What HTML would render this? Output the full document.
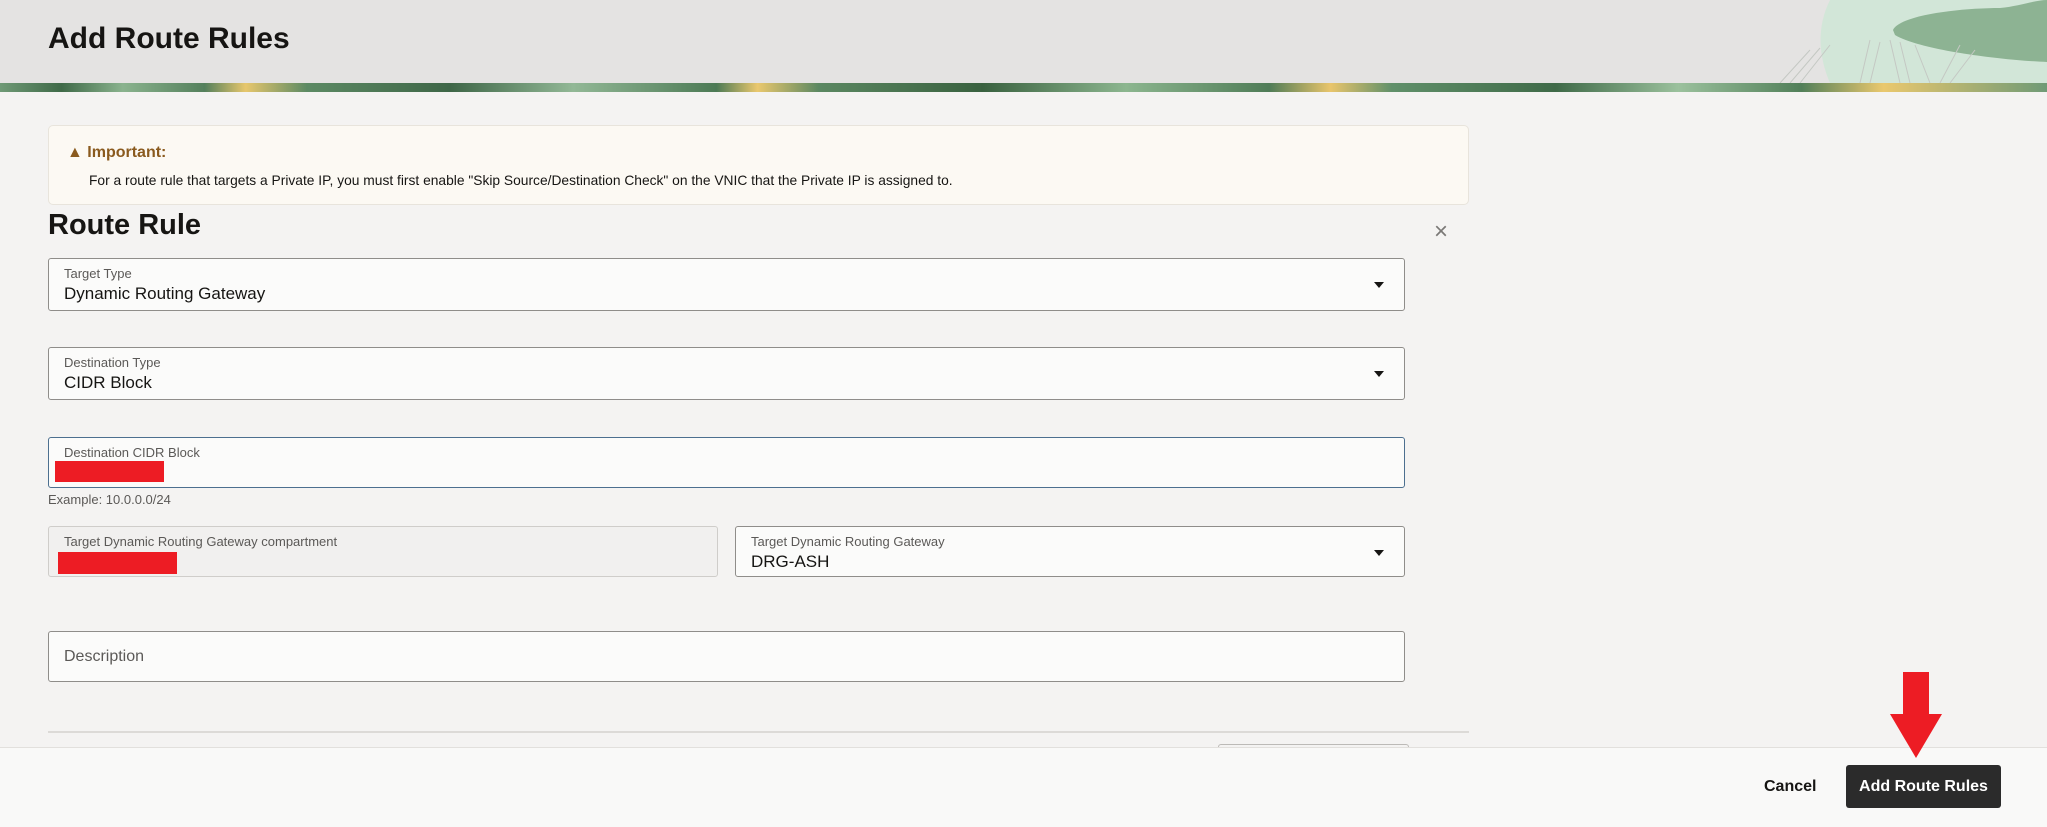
<!DOCTYPE html>
<html><head><meta charset="utf-8"><style>
*{box-sizing:border-box;margin:0;padding:0}
body{width:2047px;height:827px;overflow:hidden;background:#f4f3f2;font-family:"Liberation Sans",sans-serif;color:#161513;position:relative}
.abs{position:absolute}
.hdr{left:0;top:0;width:2047px;height:83px;background:#e4e3e2;overflow:hidden}
.band{left:0;top:83px;width:2047px;height:9px;background:linear-gradient(90deg,#6f9a76 0,#3f6a48 3%,#8ab38e 6%,#54805c 10%,#e7c76d 12%,#5c8a64 15%,#3e6647 22%,#92b896 28%,#4c7a55 35%,#eac86e 37%,#5b8862 40%,#39613f 48%,#8cb68f 55%,#4f7c57 62%,#e9c56c 65%,#60906a 68%,#3f6a48 76%,#9bc19d 82%,#517f59 88%,#eac86e 92%,#6f9a76 100%)}
.title{left:48px;top:22px;font-size:30px;font-weight:bold}
.imp{left:48px;top:125px;width:1421px;height:80px;background:#fcf9f3;border:1px solid #e8e4dc;border-radius:5px}
.field{border:1px solid #8f8d8a;border-radius:3px;background:#fbfbfa}
.lbl{position:absolute;left:15px;top:7px;font-size:13px;color:#5b5957}
.val{position:absolute;left:15px;top:25px;font-size:17px}
.caret{position:absolute;right:20px;top:23px;width:0;height:0;border-left:5px solid transparent;border-right:5px solid transparent;border-top:6px solid #161513}
.red{background:#ed1c24}
</style></head><body>
<div class="abs hdr">
<svg width="2047" height="83" style="position:absolute;left:0;top:0">
<path d="M1830 0 C1815 30 1820 60 1830 83 L2047 83 L2047 0 Z" fill="#d2e6d8"/>
<path d="M1893 30 C1900 15 1960 8 2000 8 C2020 6 2035 0 2047 0 L2047 62 C2000 60 1920 50 1895 35 Z" fill="#8db393"/>
<g stroke="#c4c8c3" stroke-width="1" fill="none">
<path d="M1780 83 L1810 50 M1790 83 L1820 48 M1800 83 L1830 45 M1860 83 L1870 40 M1870 83 L1880 42 M1900 83 L1890 40 M1910 83 L1900 42 M1930 83 L1915 45 M1940 83 L1960 45 M1950 83 L1975 50"/>
</g>
</svg>
</div>
<div class="abs band"></div>
<div class="abs title">Add Route Rules</div>
<div class="abs imp">
<div class="abs" style="left:18px;top:18px;font-size:16px;font-weight:bold;color:#8a5a1e">&#9650; Important:</div>
<div class="abs" style="left:40px;top:47px;font-size:13.8px">For a route rule that targets a Private IP, you must first enable "Skip Source/Destination Check" on the VNIC that the Private IP is assigned to.</div>
</div>
<div class="abs" style="left:48px;top:209px;font-size:29px;font-weight:bold">Route Rule</div>
<div class="abs" style="left:1434px;top:218px;font-size:24px;color:#7a7876">&#215;</div>

<div class="abs field" style="left:48px;top:258px;width:1357px;height:53px"><div class="lbl">Target Type</div><div class="val">Dynamic Routing Gateway</div><div class="caret"></div></div>
<div class="abs field" style="left:48px;top:347px;width:1357px;height:53px"><div class="lbl">Destination Type</div><div class="val">CIDR Block</div><div class="caret"></div></div>
<div class="abs field" style="left:48px;top:437px;width:1357px;height:51px;border-color:#4c6f8f;border-width:1.5px"><div class="lbl">Destination CIDR Block</div><div class="abs red" style="left:6px;top:23px;width:109px;height:21px"></div></div>
<div class="abs" style="left:48px;top:492px;font-size:13px;color:#5b5957">Example: 10.0.0.0/24</div>
<div class="abs field" style="left:48px;top:526px;width:670px;height:51px;background:#f1f0ef;border-color:#cfcdca"><div class="lbl">Target Dynamic Routing Gateway compartment</div><div class="abs red" style="left:9px;top:25px;width:119px;height:22px"></div></div>
<div class="abs field" style="left:735px;top:526px;width:670px;height:51px"><div class="lbl">Target Dynamic Routing Gateway</div><div class="val">DRG-ASH</div><div class="caret"></div></div>
<div class="abs field" style="left:48px;top:631px;width:1357px;height:51px"><div class="abs" style="left:15px;top:16px;font-size:16px;color:#5b5957">Description</div></div>
<div class="abs" style="left:48px;top:731px;width:1421px;height:2px;background:#dcdad7"></div>
<div class="abs" style="left:1218px;top:744px;width:191px;height:10px;border:1px solid #bcbab7;border-bottom:none;border-radius:3px 3px 0 0"></div>
<div class="abs" style="left:0;top:747px;width:2047px;height:80px;background:#f9f9f8;border-top:1px solid #e2e0dd"></div>
<div class="abs" style="left:1764px;top:778px;font-size:16px;font-weight:bold">Cancel</div>
<div class="abs" style="left:1846px;top:765px;width:155px;height:43px;background:#2b2b2b;border-radius:3px;color:#fff;font-size:16px;font-weight:bold;text-align:center;line-height:43px">Add Route Rules</div>
<svg class="abs" style="left:1890px;top:670px" width="56" height="90"><path d="M13 2 H39 V44 H52 L26 88 L0 44 H13 Z" fill="#ed1c24"/></svg>
</body></html>
